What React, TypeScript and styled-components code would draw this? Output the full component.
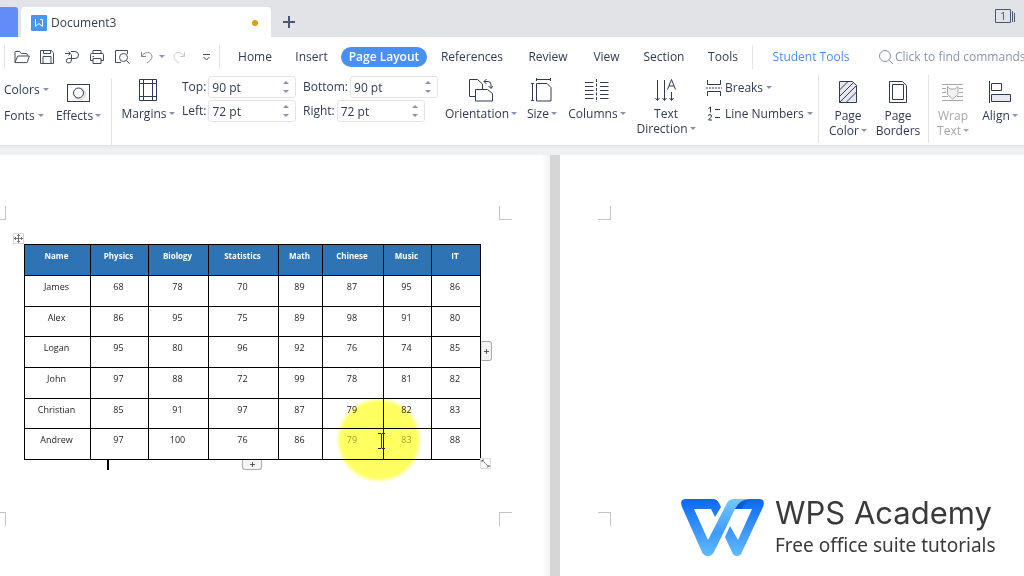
import React from 'react';
import styled, { createGlobalStyle, css } from 'styled-components';

const ink = '#2f3a54';
const line = '#e3e4e7';
const muted = '#8a93ad';

const GlobalStyle = createGlobalStyle`
  * { box-sizing: border-box; }
  body {
    margin: 0;
    overflow: hidden;
    font-family: "Open Sans", "Noto Sans", sans-serif;
    font-size: 12px;
    line-height: 16px;
    color: ${ink};
    background: #fff;
  }
  button, input { font: inherit; color: inherit; }
  button { padding: 0; border: 0; background: none; }
`;

const Window = styled.div`
  display: flex;
  flex-direction: column;
  height: 100vh;
  overflow: hidden;
`;

/* ---------- title bar ---------- */

const TitleBar = styled.header`
  display: flex;
  align-items: flex-end;
  flex: none;
  height: 37px;
  background: #e1e3e7;
`;

const HomeTab = styled.button`
  width: 18px;
  height: 30px;
  margin-right: 3px;
  border-radius: 0 3px 0 0;
  background: #638cf8;
`;

const DocumentTab = styled.div`
  display: flex;
  align-items: center;
  gap: 4px;
  width: 250px;
  height: 30px;
  padding: 1px 13px 0 10px;
  border-radius: 4px 4px 0 0;
  background: #fff;
  color: #333c50;
`;

const UnsavedDot = styled.span`
  width: 6px;
  height: 6px;
  margin-left: auto;
  border-radius: 50%;
  background: #e69a12;
`;

const NewTab = styled.button`
  display: grid;
  place-items: center;
  width: 36px;
  height: 30px;
`;

const WindowCount = styled.button`
  align-self: flex-start;
  height: 16px;
  margin: 8px 8px 0 auto;
`;

/* ---------- menu row ---------- */

const MenuRow = styled.nav`
  display: flex;
  align-items: center;
  flex: none;
  height: 38px;
  padding: 1px 0 0 4px;
  white-space: nowrap;
`;

const Rule = styled.span<{ $tall?: boolean }>`
  flex: none;
  width: 1px;
  height: ${p => (p.$tall ? 68 : 24)}px;
  background: ${line};
`;

const QuickBar = styled.div`
  display: flex;
  align-items: center;
  flex: none;
  padding-left: 4px;
`;

const QuickButton = styled.button<{ $w?: number }>`
  display: grid;
  place-items: center;
  width: ${p => p.$w ?? 25}px;
  height: 24px;
`;

const Tabs = styled.div`
  display: flex;
  align-items: center;
  flex: none;
  padding-left: 8px;
`;

const MenuTab = styled.button<{ $w: number; $active?: boolean; $accent?: boolean }>`
  flex: none;
  width: ${p => p.$w}px;
  height: 20px;
  border-radius: 10px;
  color: ${p => (p.$accent ? '#4a90f0' : ink)};
  ${p => p.$active && css`
    background: #4a90f2;
    color: #fff;
    font-weight: 600;
  `}
`;

const Search = styled.label`
  display: flex;
  align-items: center;
  flex: 1;
  gap: 1px;
  min-width: 0;
  padding-left: 9px;
  color: ${muted};
`;

const SearchInput = styled.input`
  flex: 1;
  min-width: 0;
  padding: 0;
  border: 0;
  outline: 0;
  background: none;
  &::placeholder { color: ${muted}; opacity: 1; }
`;

/* ---------- ribbon ---------- */

const Ribbon = styled.div`
  display: flex;
  flex: none;
  height: 71px;
  border-bottom: 1px solid #dfe0e2;
  white-space: nowrap;
`;

const Strip = styled.div`
  flex: none;
  height: 9px;
  background: linear-gradient(#e8eaec, #eff1f3 4px);
`;

const Group = styled.section<{ $low?: boolean; $left?: number; $right?: number }>`
  display: flex;
  align-items: flex-start;
  flex: none;
  padding: ${p => (p.$low ? 5 : 3)}px ${p => p.$right ?? 0}px 0 ${p => p.$left ?? 0}px;
`;

const Tool = styled.button<{ $w: number; $disabled?: boolean }>`
  display: flex;
  flex-direction: column;
  align-items: center;
  flex: none;
  gap: 4px;
  width: ${p => p.$w}px;
  line-height: 15px;
  color: ${p => (p.$disabled ? '#a7a8ab' : ink)};
`;

const List = styled.div<{ $left: number; $w: number }>`
  display: flex;
  flex-direction: column;
  gap: 10px;
  width: ${p => p.$w}px;
  padding: 2px 0 0 ${p => p.$left}px;
`;

const ListItem = styled.button`
  display: flex;
  align-items: center;
  gap: 3px;
  height: 16px;
`;

const Caption = styled.span`
  display: flex;
  align-items: center;
  gap: 2px;
`;

const CaptionText = styled.span`
  flex: 1;
  text-align: center;
`;

const Fields = styled.div`
  display: flex;
  flex-direction: column;
  gap: 2px;
  margin: -2px 0 0 6px;
  width: 261px;
`;

const FieldRow = styled.div`
  display: grid;
  grid-template-columns: 121px 1fr;
`;

const Field = styled.label`
  display: flex;
  align-items: center;
  gap: 2px;
`;

const NumberBox = styled.span`
  display: flex;
  align-items: center;
  width: 88px;
  height: 22px;
  padding: 0 6px 0 3px;
  border: 1px solid ${line};
  border-radius: 3px;
  background: #fff;
`;

const NumberInput = styled.input`
  flex: 1;
  min-width: 0;
  height: 20px;
  padding: 0;
  border: 0;
  outline: 0;
  background: none;
`;

const Stepper = styled.span`
  display: flex;
  flex-direction: column;
  gap: 6px;
`;

const StepButton = styled.button<{ $up?: boolean }>`
  width: 0;
  height: 0;
  border: 3px solid transparent;
  border-top-width: ${p => (p.$up ? 0 : 3)}px;
  border-bottom-width: ${p => (p.$up ? 3 : 0)}px;
  border-top-color: ${muted};
  border-bottom-color: ${muted};
`;

/* ---------- document ---------- */

const Workspace = styled.main`
  display: flex;
  flex: 1;
  gap: 10px;
  min-height: 0;
  background: #d4d6d8;
`;

const Page = styled.article<{ $fill?: boolean }>`
  position: relative;
  padding-top: 51px;
  background: #fff;
  ${p => (p.$fill
    ? css`flex: 1; min-width: 0;`
    : css`
        flex: none;
        width: 550px;
        background: linear-gradient(to left, #f1f1f1, #fff 8px);
      `)}
`;

const CropRow = styled.div`
  display: flex;
  justify-content: space-between;
  padding-right: 38px;
`;

const CropColumn = styled.div`
  display: flex;
  flex-direction: column;
  gap: 292px;
  padding-left: 38px;
`;

const CropMark = styled.span<{ $side: 'left' | 'right'; $edge: 'top' | 'bottom'; $w: number }>`
  width: ${p => p.$w}px;
  height: 14px;
  border: 0 solid #c4c4c4;
  border-${p => (p.$side === 'left' ? 'right' : 'left')}-width: 1px;
  border-${p => (p.$edge === 'top' ? 'bottom' : 'top')}-width: 1px;
`;

const PageBody = styled.div`
  position: relative;
  height: 292px;
  padding: 24px 0 0 24px;
`;

const Grades = styled.table`
  width: 457px;
  border-collapse: collapse;
  table-layout: fixed;
  font-size: 9px;
  line-height: 12px;
  text-align: center;
  color: #1c1c1c;

  th, td {
    padding: 5px 2px 0 0;
    border: 1px solid #000;
    vertical-align: top;
  }
  th {
    background: #2e74b5;
    color: #fff;
    font-size: 8px;
    font-weight: 700;
  }
  tr { height: 31px; }
  tbody tr:nth-child(3n + 2) { height: 30px; }
`;

const Cell = styled.td<{ $faded?: boolean }>`
  color: ${p => (p.$faded ? '#a8a36a' : 'inherit')};
`;

const Floating = styled.span<{ $x: number; $y: number }>`
  position: absolute;
  left: ${p => p.$x}px;
  top: ${p => p.$y}px;
  line-height: 0;
`;

const AddHandle = styled.button<{ $side: 'right' | 'bottom' }>`
  position: absolute;
  display: grid;
  place-items: center;
  border: 1px solid #a9a9a9;
  background: #f5f5f5;
  ${p => (p.$side === 'right'
    ? css`left: 481px; top: 121px; width: 11px; height: 20px; border-radius: 0 3px 3px 0; border-left-color: #ddd;`
    : css`left: 242px; top: 240px; width: 20px; height: 10px; border-radius: 0 0 3px 3px; border-top: 0;`)}
`;

const TextCaret = styled.span`
  position: absolute;
  left: 107px;
  top: 240px;
  width: 2px;
  height: 10px;
  background: #000;
`;

const Spotlight = styled.span`
  position: absolute;
  left: 336px;
  top: 177px;
  width: 86px;
  height: 86px;
  border-radius: 50%;
  background: radial-gradient(closest-side, #ffff62 88%, #ffffff 100%);
  mix-blend-mode: multiply;
`;

const Watermark = styled.footer`
  position: absolute;
  right: 29px;
  bottom: 17px;
  display: flex;
  align-items: flex-start;
  gap: 10px;
  color: #3a3a3a;
  white-space: nowrap;
`;

const Brand = styled.div`
  width: 220px;
  margin-top: -4px;
  font-family: Inter, sans-serif;
  font-size: 31px;
  line-height: 36px;
`;

const Tagline = styled.div`
  width: 220px;
  font-family: "Noto Sans", sans-serif;
  font-size: 19px;
  line-height: 28px;
`;

/* ---------- icons ---------- */

type IconProps = { w?: number; h?: number; color?: string; children: React.ReactNode };

const Icon = ({ w = 24, h = 24, color = ink, children }: IconProps) => (
  <svg width={w} height={h} viewBox={`0 0 ${w} ${h}`} fill="none" stroke={color} aria-hidden="true">
    {children}
  </svg>
);

const Down = ({ color = muted }: { color?: string }) => (
  <svg width="6" height="6" viewBox="0 0 6 6" fill={color} aria-hidden="true">
    <path d="M0 1h6L3 4z" />
  </svg>
);

const quick = '#454c59';

const FolderIcon = () => (
  <Icon w={16} h={16} color={quick}>
    <path d="M1 13.5V3.2q0-.7.7-.7h4l1.6 2h5.2q.7 0 .7.7v1.6M1 13.5 3.7 7h11.6l-2 6.2q-.1.4-.6.4H1z" />
  </Icon>
);
const SaveIcon = () => (
  <Icon w={16} h={16} color={quick}>
    <path d="M1.5 1.5h10.7l2.3 2.3v10.7h-13zM4.5 1.5v3h7v-3M4 14.5v-7h8v7" />
  </Icon>
);
const ExportIcon = () => (
  <Icon w={16} h={16} color={quick}>
    <path d="M1 4.5h5.5M4.500 2.500l2 2-2 2M7 2.500h4a3.500 3.500 0 0 1 0 7H4.500a2 2 0 0 0 0 4.500q3 0 3-3V5.500" />
  </Icon>
);
const PrintIcon = () => (
  <Icon w={16} h={16} color={quick}>
    <path d="M4 4.500v-3h8v3M4 11.500H1.500v-6q0-1 1-1h11q1 0 1 1v6H12M4 9.500h8v5H4zM3.500 7.500H5" />
  </Icon>
);
const PreviewIcon = () => (
  <Icon w={16} h={16} color={quick}>
    <path d="M7 13.500H1.500v-12h12V5" />
    <circle cx="9.500" cy="8.500" r="4" />
    <path d="m12.500 11.500 3 3.200" />
  </Icon>
);
const UndoIcon = () => (
  <Icon w={16} h={16} color="#7d869f">
    <path d="M2.500 3v4.500H7M2.500 7.500C5 2.500 12.500 2 13 7.500c0 3-2.500 4.500-5 6.500" />
  </Icon>
);
const RedoIcon = () => (
  <Icon w={16} h={16} color="#c9ccd2">
    <path d="M13.500 3v4.500H9M13.500 7.500C11 2.500 3.500 2 3 7.500c0 3 2.500 4.500 5 6.500" />
  </Icon>
);
const MoreIcon = () => (
  <Icon w={9} h={8} color={quick}>
    <path d="M1 1.500h7M1.500 4l3 3 3-3" />
  </Icon>
);

const EffectsIcon = () => (
  <Icon>
    <rect x=".5" y="4.500" width="22" height="17" />
    <circle cx="13" cy="14" r="5.500" stroke="#dfe2e8" strokeWidth="2" />
    <circle cx="11.500" cy="13" r="5" fill="#fff" />
  </Icon>
);
const MarginsIcon = () => (
  <Icon>
    <path d="M3.500 1.500h17v21h-17zM7.500 1.500v21M16.500 1.500v21M3.500 5.500h17M3.500 18.500h17" />
  </Icon>
);
const OrientationIcon = () => (
  <Icon>
    <path d="M6 18.500H.5v-17h8l5 4.500v5M6.500 11.500h12l5 4v7.500h-17zM15 3.500h4q3 0 3 3V10M17.500 1 15 3.500 17.500 6M19.500 8l2.500 2.500L24 8" />
  </Icon>
);
const SizeIcon = () => (
  <Icon>
    <path d="M6.500 5.500H17l4 4v13.500H6.500zM6.500 1.500h14M6.500 0v3M20.500 0v3M2.500 5.500V23M1 5.500h3M1 22.500h3" />
  </Icon>
);
const ColumnsIcon = () => (
  <Icon>
    <path d="M0 4.500h8.500M0 8.500h8.500M0 12.500h8.500M0 16.500h8.500M0 20.500h8.500M15 4.500h8.500M15 8.500h8.500M15 12.500h8.500M15 16.500h8.500M15 20.500h8.500" />
    <path d="M11.500 1v23" strokeDasharray="3 1.500" />
  </Icon>
);
const DirectionIcon = () => (
  <Icon>
    <path d="M3.500 2v20M1.500 20l2 2.500 2-2.500M10.500 2v20M8.500 20l2 2.500 2-2.500M17.500 14v8M15.500 20l2 2.500 2-2.500M13.500 11.500l4-10 4 10M15 8h5" />
  </Icon>
);
const BreaksIcon = () => (
  <Icon w={16} h={16}>
    <path d="M1.500 0v4.500h13V0M1.500 16v-4.500h13V16" />
    <path d="M0 8h16" strokeDasharray="2 1" />
  </Icon>
);
const NumbersIcon = () => (
  <Icon w={16} h={16}>
    <path d="M2.500 2.500 4.500 1v5.500M2.500 10q0-1.500 1.500-1.500T5.500 10q0 1-3 4H6M9 3.500h5M9 11.500h5" />
  </Icon>
);
const PageColorIcon = () => (
  <Icon>
    <path d="M3.500 1.500h13l4 4v17h-17z" fill="#e8e9ec" />
    <path d="M3.500 10 12 1.500M3.500 16.500l14-14M3.500 22.500l17-17M10 22.500l10.500-10.500" />
  </Icon>
);
const PageBordersIcon = () => (
  <Icon>
    <path d="M3.500 1.500h13l4 4v17h-17z" />
    <path d="M6.500 4.500h11v15h-11z" />
  </Icon>
);
const WrapIcon = () => (
  <Icon color="#a7a8ab">
    <path d="M1 4.500h21M1 8.500h4M18 8.500h4M1 12.500h4M18 12.500h4M1 16.500h6M16 16.500h6M1 20.500h21" />
    <path d="M6.500 6.500 9 9h5l3-2.500v8L11.500 19l-5-4.500z" fill="#f1f1f2" />
  </Icon>
);
const AlignIcon = () => (
  <Icon>
    <path d="M1.500 1v22M3.500 3.500h10v7h-10z" />
    <path d="M3.500 14.500h19v7h-19z" fill="#e8e9ec" />
  </Icon>
);

const WriterBadge = () => (
  <svg width="16" height="16" viewBox="0 0 16 16" aria-hidden="true">
    <rect width="16" height="16" rx="1" fill="#4a94f3" />
    <path d="M4.500 4v7.500L8 8.500l3.500 3V4.500H9" fill="none" stroke="#fff" />
  </svg>
);

const Logo = () => (
  <svg width="84" height="58" viewBox="0 0 84 58" aria-hidden="true">
    <defs>
      <linearGradient id="limb" x1="0" y1="0" x2="0" y2="1">
        <stop offset="0" stopColor="#0b68f3" />
        <stop offset="1" stopColor="#62bbff" />
      </linearGradient>
      <linearGradient id="fold" x1="0" y1="0" x2="0" y2="1">
        <stop offset="0" stopColor="#74c8ff" />
        <stop offset=".6" stopColor="#3f9afc" />
        <stop offset="1" stopColor="#62bbff" />
      </linearGradient>
      <linearGradient id="shade" x1="0" y1="0" x2="1" y2="0">
        <stop offset="0" stopColor="#0a4fc4" />
        <stop offset="1" stopColor="#0f6cf5" />
      </linearGradient>
    </defs>
    <path d="M5 0H32Q36 0 38 4L40 8 34 18 30 10H13L27 41 32 50Q31 57 27 57 23 57 21 53L1 8Q-2 0 5 0z" fill="url(#limb)" />
    <path d="M60 0H78Q85 0 82 8L61 53Q60 57 56 57 52 57 51 53L44 38 49 27 57 41 71 10H53z" fill="url(#limb)" />
    <path d="M62 0H74Q64 1 61 10H53z" fill="url(#shade)" />
    <path d="M68 0H53Q48 0 46 4L27 41 21 53q2 4 6 4 4 0 6-4L54 10Q58 1 68 0z" fill="url(#fold)" />
  </svg>
);

/* ---------- data ---------- */

const columns: [string, number][] = [
  ['Name', 66], ['Physics', 58], ['Biology', 60], ['Statistics', 70],
  ['Math', 44], ['Chinese', 61], ['Music', 48], ['IT', 49],
];

const students: [string, number[]][] = [
  ['James', [68, 78, 70, 89, 87, 95, 86]],
  ['Alex', [86, 95, 75, 89, 98, 91, 80]],
  ['Logan', [95, 80, 96, 92, 76, 74, 85]],
  ['John', [97, 88, 72, 99, 78, 81, 82]],
  ['Christian', [85, 91, 97, 87, 79, 82, 83]],
  ['Andrew', [97, 100, 76, 86, 79, 83, 88]],
];

const NumberField = ({ label, value }: { label: string; value: string }) => (
  <Field>
    {label}
    <NumberBox>
      <NumberInput defaultValue={value} />
      <Stepper>
        <StepButton $up type="button" tabIndex={-1} aria-label={`Increase ${label}`} />
        <StepButton type="button" tabIndex={-1} aria-label={`Decrease ${label}`} />
      </Stepper>
    </NumberBox>
  </Field>
);

type ToolProps = { icon: React.ReactNode; w: number; lines: string[]; menu?: boolean; disabled?: boolean };

const RibbonTool = ({ icon, w, lines, menu = true, disabled }: ToolProps) => (
  <Tool type="button" $w={w} $disabled={disabled} disabled={disabled}>
    {icon}
    <span>
      {lines.map((text, i) => (
        <Caption key={text}>
          <CaptionText>{text}</CaptionText>
          {menu && i === lines.length - 1 && <Down color={disabled ? '#a7a8ab' : muted} />}
        </Caption>
      ))}
    </span>
  </Tool>
);

export default function App() {
  return (
    <Window>
      <GlobalStyle />
      <TitleBar>
        <HomeTab type="button" aria-label="Home" />
        <DocumentTab>
          <WriterBadge />
          Document3
          <UnsavedDot />
        </DocumentTab>
        <NewTab type="button" aria-label="New tab">
          <Icon w={12} h={12} color="#4b5675"><path d="M6 0v12M0 6h12" strokeWidth="2" /></Icon>
        </NewTab>
        <WindowCount type="button" aria-label="Open windows">
          <svg width="21" height="16" viewBox="0 0 21 16" fill="none" stroke="#4b5675" aria-hidden="true">
            <path d="M.5 1.500h15v13H.5zM17.500 3v11M19.500 5v9" />
            <text x="5" y="12" fontSize="11" fill="#4b5675" stroke="none">1</text>
          </svg>
        </WindowCount>
      </TitleBar>

      <MenuRow>
        <Rule />
        <QuickBar>
          <QuickButton type="button" aria-label="Open"><FolderIcon /></QuickButton>
          <QuickButton type="button" aria-label="Save"><SaveIcon /></QuickButton>
          <QuickButton type="button" aria-label="Export to PDF"><ExportIcon /></QuickButton>
          <QuickButton type="button" aria-label="Print"><PrintIcon /></QuickButton>
          <QuickButton type="button" aria-label="Print preview"><PreviewIcon /></QuickButton>
          <QuickButton type="button" aria-label="Undo"><UndoIcon /></QuickButton>
          <QuickButton type="button" $w={6} aria-label="Undo history"><Down /></QuickButton>
          <QuickButton type="button" $w={28} aria-label="Redo"><RedoIcon /></QuickButton>
          <QuickButton type="button" $w={26} aria-label="Customize"><MoreIcon /></QuickButton>
        </QuickBar>
        <Rule />
        <Tabs>
          <MenuTab type="button" $w={54}>Home</MenuTab>
          <MenuTab type="button" $w={59}>Insert</MenuTab>
          <MenuTab type="button" $w={86} $active>Page Layout</MenuTab>
          <MenuTab type="button" $w={90}>References</MenuTab>
          <MenuTab type="button" $w={62}>Review</MenuTab>
          <MenuTab type="button" $w={55}>View</MenuTab>
          <MenuTab type="button" $w={60}>Section</MenuTab>
          <MenuTab type="button" $w={58}>Tools</MenuTab>
        </Tabs>
        <Rule />
        <MenuTab type="button" $w={116} $accent>Student Tools</MenuTab>
        <Search>
          <Icon w={16} h={16} color={muted}>
            <circle cx="7" cy="7" r="5.500" />
            <path d="m11 11 4 4" />
          </Icon>
          <SearchInput aria-label="Find commands" placeholder="Click to find commands" />
        </Search>
      </MenuRow>

      <Ribbon>
        <Group $low>
          <List $left={4} $w={52}>
            <ListItem type="button">Colors<Down /></ListItem>
            <ListItem type="button">Fonts<Down /></ListItem>
          </List>
          <RibbonTool w={53} icon={<EffectsIcon />} lines={['Effects']} />
        </Group>
        <Group $left={6}><Rule $tall /></Group>
        <Group $left={8}>
          <RibbonTool w={56} icon={<MarginsIcon />} lines={['Margins']} />
          <Fields>
            <FieldRow>
              <NumberField label="Top:" value="90 pt" />
              <NumberField label="Bottom:" value="90 pt" />
            </FieldRow>
            <FieldRow>
              <NumberField label="Left:" value="72 pt" />
              <NumberField label="Right:" value="72 pt" />
            </FieldRow>
          </Fields>
          <RibbonTool w={76} icon={<OrientationIcon />} lines={['Orientation']} />
          <RibbonTool w={46} icon={<SizeIcon />} lines={['Size']} />
          <RibbonTool w={64} icon={<ColumnsIcon />} lines={['Columns']} />
          <RibbonTool w={74} icon={<DirectionIcon />} lines={['Text', 'Direction']} />
          <List $left={3} $w={115}>
            <ListItem type="button"><BreaksIcon />Breaks<Down /></ListItem>
            <ListItem type="button"><NumbersIcon />Line Numbers<Down /></ListItem>
          </List>
        </Group>
        <Rule $tall />
        <Group $low $left={4} $right={5}>
          <RibbonTool w={50} icon={<PageColorIcon />} lines={['Page', 'Color']} />
          <RibbonTool w={50} icon={<PageBordersIcon />} lines={['Page', 'Borders']} menu={false} />
        </Group>
        <Rule $tall />
        <Group $low>
          <RibbonTool w={48} icon={<WrapIcon />} lines={['Wrap', 'Text']} disabled />
          <RibbonTool w={46} icon={<AlignIcon />} lines={['Align']} />
        </Group>
      </Ribbon>
      <Strip />

      <Workspace>
        <Page>
          <CropRow>
            <CropMark $side="left" $edge="top" $w={6} />
            <CropMark $side="right" $edge="top" $w={13} />
          </CropRow>
          <PageBody>
            <Grades>
              <colgroup>{columns.map(([name, w]) => <col key={name} width={w} />)}</colgroup>
              <thead>
                <tr>{columns.map(([name]) => <th key={name} scope="col">{name}</th>)}</tr>
              </thead>
              <tbody>
                {students.map(([name, marks]) => (
                  <tr key={name}>
                    <Cell>{name}</Cell>
                    {marks.map((mark, i) => (
                      <Cell key={i} $faded={name === 'Andrew' && (i === 4 || i === 5)}>{mark}</Cell>
                    ))}
                  </tr>
                ))}
              </tbody>
            </Grades>
            <Floating $x={13} $y={13}>
              <svg width="11" height="11" viewBox="0 0 11 11" fill="none" stroke="#555" aria-hidden="true">
                <rect x=".5" y=".5" width="10" height="10" stroke="#d5d5d5" />
                <path d="M5.500 1.500v8M1.500 5.500h8M4 3l1.500-1.500L7 3M4 8l1.500 1.500L7 8M3 4 1.500 5.500 3 7M8 4l1.500 1.500L8 7" strokeWidth=".8" />
              </svg>
            </Floating>
            <Floating $x={480} $y={238}>
              <svg width="11" height="11" viewBox="0 0 11 11" fill="none" stroke="#555" aria-hidden="true">
                <rect x=".5" y=".5" width="10" height="10" fill="#fff" stroke="#dcdce4" />
                <path d="M2 4V2h2M2 2l7 7M9 7v2H7" strokeDasharray="2 1" />
              </svg>
            </Floating>
            <AddHandle type="button" $side="right" aria-label="Add column">
              <Icon w={5} h={5} color="#555"><path d="M2.500 0v5M0 2.500h5" /></Icon>
            </AddHandle>
            <AddHandle type="button" $side="bottom" aria-label="Add row">
              <Icon w={5} h={5} color="#555"><path d="M2.500 0v5M0 2.500h5" /></Icon>
            </AddHandle>
            <TextCaret />
            <Spotlight />
            <Floating $x={378} $y={213}>
              <svg width="8" height="16" viewBox="0 0 8 16" fill="none" stroke="#1f2a5c" aria-hidden="true">
                <path d="M0 .5h3l.5 1 .5-1h3M3.500 1v14M0 15.500h3l.5-1 .5 1h3" />
              </svg>
            </Floating>
          </PageBody>
          <CropRow>
            <CropMark $side="left" $edge="bottom" $w={6} />
            <CropMark $side="right" $edge="bottom" $w={13} />
          </CropRow>
        </Page>
        <Page $fill>
          <CropColumn>
            <CropMark $side="left" $edge="top" $w={13} />
            <CropMark $side="left" $edge="bottom" $w={13} />
          </CropColumn>
          <Watermark>
            <Logo />
            <div>
              <Brand>WPS Academy</Brand>
              <Tagline>Free office suite tutorials</Tagline>
            </div>
          </Watermark>
        </Page>
      </Workspace>
    </Window>
  );
}
